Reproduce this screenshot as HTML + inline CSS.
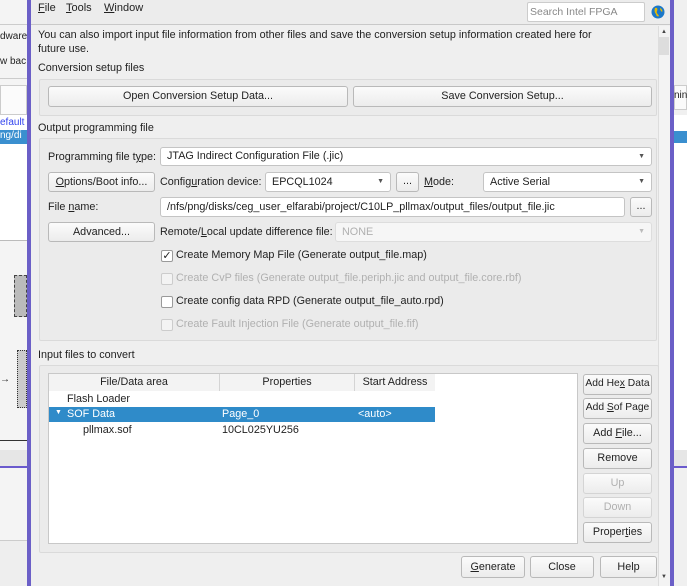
<!DOCTYPE html>
<html><head><style>
*{box-sizing:border-box;margin:0;padding:0}
body{width:687px;height:586px;overflow:hidden;background:#e8e8e8;font-family:"Liberation Sans","DejaVu Sans",sans-serif;font-size:10.8px;color:#222;position:relative}
.a{position:absolute;white-space:nowrap}
.btn{position:absolute;background:linear-gradient(#fbfbfb,#ececec);border:1px solid #b9b9b9;border-radius:3px;text-align:center;line-height:18px;white-space:nowrap;overflow:hidden}
.dis{color:#b0b0b0}
.cb{position:absolute;background:#fff;border:1px solid #9a9a9a;border-radius:2px;text-align:center;line-height:10px;font-size:11px}
.combo{position:absolute;background:#fff;border:1px solid #c4c4c4;border-radius:3px;padding-left:6px;line-height:17px;white-space:nowrap}
.combo .ar{position:absolute;right:6px;top:0;font-size:7px;color:#555}
.grp{position:absolute;border:1px solid #dadada;background:#ebebeb;border-radius:2px}
</style></head><body>
<div class="a" style="left:0;top:0;width:27px;height:586px;background:#f4f4f4"></div>
<div class="a" style="left:0;top:24px;width:27px;height:1px;background:#ccc"></div>
<div class="a" style="left:0;top:31px;font-size:10px">dware</div>
<div class="a" style="left:0;top:56px;font-size:10px">w bac</div>
<div class="a" style="left:0;top:78px;width:27px;height:1px;background:#ccc"></div>
<div class="a" style="left:0;top:85px;width:27px;height:30px;background:#fbfbfb;border:1px solid #ccc"></div>
<div class="a" style="left:0;top:115px;width:27px;height:125px;background:#fff"></div>
<div class="a" style="left:0;top:117px;color:#3344ee;font-size:10px">efault</div>
<div class="a" style="left:0;top:130px;width:27px;height:14px;background:#3a8fcf;color:#fff;font-size:10px">ng/di</div>
<div class="a" style="left:0;top:240px;width:27px;height:1px;background:#bbb"></div>
<div class="a" style="left:14px;top:275px;width:13px;height:42px;border:1px dashed #444;background:#bbb"></div>
<div class="a" style="left:17px;top:350px;width:10px;height:58px;border:1px dotted #333;background:#ccc"></div>
<div class="a" style="left:0;top:374px;font-size:10px">→</div>
<div class="a" style="left:0;top:440px;width:27px;height:1px;background:#333"></div>
<div class="a" style="left:0;top:450px;width:27px;height:18px;background:#e6e6e6;border-bottom:2px solid #6a5acd"></div>
<div class="a" style="left:0;top:540px;width:27px;height:46px;background:#eee;border-top:1px solid #ccc"></div>
<div class="a" style="left:674px;top:0;width:13px;height:586px;background:#f0f0f0"></div>
<div class="a" style="left:674px;top:85px;width:13px;height:25px;background:#fafafa;border:1px solid #ccc"></div>
<div class="a" style="left:674px;top:90px;font-size:10px">nin</div>
<div class="a" style="left:674px;top:115px;width:13px;height:340px;background:#fff"></div>
<div class="a" style="left:674px;top:131px;width:13px;height:12px;background:#3a8fcf"></div>
<div class="a" style="left:674px;top:450px;width:13px;height:18px;background:#e6e6e6;border-bottom:2px solid #6a5acd"></div>
<div class="a" style="left:27px;top:0;width:4px;height:586px;background:#6b5fc7"></div>
<div class="a" style="left:670px;top:0;width:4px;height:586px;background:#6b5fc7"></div>
<div class="a" style="left:31px;top:0;width:639px;height:586px;background:#efefef"></div>
<div class="a" style="left:31px;top:0;width:639px;height:25px;background:#ececec;border-bottom:1px solid #c8c8c8"></div>
<div class="a" style="left:38px;top:2px;font-size:11px"><u>F</u>ile</div>
<div class="a" style="left:66px;top:2px;font-size:11px"><u>T</u>ools</div>
<div class="a" style="left:104px;top:2px;font-size:11px"><u>W</u>indow</div>
<div class="a" style="left:527px;top:2px;width:118px;height:20px;background:#fff;border:1px solid #ccc;border-radius:2px;color:#888;padding:3px 2px;font-size:10.5px">Search Intel FPGA</div>
<svg class="a" style="left:651px;top:5px" width="14" height="14"><circle cx="7" cy="7" r="6.5" fill="#1c78c8"/><path d="M4 3 C6 2 7 4 6 6 C5 8 7 9 8 11 C7 12 5 11 5 9 C4 8 3 6 4 3Z M9 3 C11 4 12 6 11 7 C10 6 9 5 9 3Z" fill="#e8b800"/></svg>
<div class="a" style="left:658px;top:26px;width:12px;height:560px;background:#f3f3f3;border-left:1px solid #ddd"></div>
<div class="a" style="left:661px;top:29px;font-size:6px;color:#444">▲</div>
<div class="a" style="left:659px;top:37px;width:10px;height:18px;background:#ddd"></div>
<div class="a" style="left:661px;top:574px;font-size:6px;color:#444">▼</div>

<div class="a" style="left:38px;top:29px">You can also import input file information from other files and save the conversion setup information created here for</div>
<div class="a" style="left:38px;top:43px">future use.</div>
<div class="a" style="left:38px;top:62px">Conversion setup files</div>
<div class="grp" style="left:39px;top:79px;width:618px;height:37px"></div>
<div class="btn" style="left:48px;top:86px;width:300px;height:21px">Open Conversion Setup Data...</div>
<div class="btn" style="left:353px;top:86px;width:299px;height:21px">Save Conversion Setup...</div>
<div class="a" style="left:38px;top:122px">Output programming file</div>
<div class="grp" style="left:39px;top:138px;width:618px;height:203px"></div>
<div class="a" style="left:48px;top:151px">Programming file t<u>y</u>pe:</div>
<div class="combo" style="left:160px;top:147px;width:492px;height:19px">JTAG Indirect Configuration File (.jic)<span class="ar">▼</span></div>
<div class="btn" style="left:48px;top:172px;width:107px;height:20px"><u>O</u>ptions/Boot info...</div>
<div class="a" style="left:160px;top:176px">Config<u>u</u>ration device:</div>
<div class="combo" style="left:265px;top:172px;width:126px;height:20px;line-height:18px">EPCQL1024<span class="ar">▼</span></div>
<div class="btn" style="left:396px;top:172px;width:23px;height:20px;line-height:16px">...</div>
<div class="a" style="left:424px;top:176px"><u>M</u>ode:</div>
<div class="combo" style="left:483px;top:172px;width:169px;height:20px;line-height:18px">Active Serial<span class="ar">▼</span></div>
<div class="a" style="left:48px;top:201px">File <u>n</u>ame:</div>
<div class="combo" style="left:160px;top:197px;width:465px;height:20px;line-height:18px">/nfs/png/disks/ceg_user_elfarabi/project/C10LP_pllmax/output_files/output_file.jic</div>
<div class="btn" style="left:630px;top:197px;width:22px;height:20px;line-height:16px">...</div>
<div class="btn" style="left:48px;top:222px;width:107px;height:20px">Advanced...</div>
<div class="a" style="left:160px;top:226px">Remote/<u>L</u>ocal update difference file:</div>
<div class="combo dis" style="left:335px;top:222px;width:317px;height:20px;line-height:18px;border-color:#ddd;background:#f6f6f6">NONE<span class="ar" style="color:#bbb">▼</span></div>
<div class="cb" style="left:161px;top:250px;width:12px;height:12px">✓</div>
<div class="a" style="left:176px;top:249px">Create Memory Map File (Generate output_file.map)</div>
<div class="cb" style="left:161px;top:273px;width:12px;height:12px;border-color:#ccc;background:#f3f3f3"></div>
<div class="a dis" style="left:176px;top:272px">Create CvP files (Generate output_file.periph.jic and output_file.core.rbf)</div>
<div class="cb" style="left:161px;top:296px;width:12px;height:12px"></div>
<div class="a" style="left:176px;top:295px">Create config data RPD (Generate output_file_auto.rpd)</div>
<div class="cb" style="left:161px;top:319px;width:12px;height:12px;border-color:#ccc;background:#f3f3f3"></div>
<div class="a dis" style="left:176px;top:318px">Create Fault Injection File (Generate output_file.fif)</div>
<div class="a" style="left:38px;top:349px">Input files to convert</div>
<div class="grp" style="left:39px;top:365px;width:620px;height:188px"></div>
<div class="a" style="left:48px;top:373px;width:530px;height:171px;background:#fff;border:1px solid #c8c8c8"></div>
<div class="a" style="left:49px;top:374px;width:171px;height:17px;background:#f3f3f3;border-right:1px solid #d4d4d4;text-align:center;line-height:17px">File/Data area</div>
<div class="a" style="left:220px;top:374px;width:135px;height:17px;background:#f3f3f3;border-right:1px solid #d4d4d4;text-align:center;line-height:17px">Properties</div>
<div class="a" style="left:355px;top:374px;width:80px;height:17px;background:#f3f3f3;text-align:center;line-height:17px">Start Address</div>
<div class="a" style="left:67px;top:393px">Flash Loader</div>
<div class="a" style="left:49px;top:407px;width:386px;height:15px;background:#2f8bc9;color:#fff"></div>
<div class="a" style="left:55px;top:409px;color:#fff;font-size:7px">▼</div>
<div class="a" style="left:67px;top:408px;color:#fff">SOF Data</div>
<div class="a" style="left:222px;top:408px;color:#fff">Page_0</div>
<div class="a" style="left:358px;top:408px;color:#fff">&lt;auto&gt;</div>
<div class="a" style="left:83px;top:424px">pllmax.sof</div>
<div class="a" style="left:222px;top:424px">10CL025YU256</div>
<div class="btn" style="left:583px;top:374px;width:69px;height:21px;font-size:10.3px">Add He<u>x</u> Data</div>
<div class="btn" style="left:583px;top:398px;width:69px;height:21px;font-size:10.3px">Add <u>S</u>of Page</div>
<div class="btn" style="left:583px;top:423px;width:69px;height:21px">Add <u>F</u>ile...</div>
<div class="btn" style="left:583px;top:448px;width:69px;height:21px">Remove</div>
<div class="btn dis" style="left:583px;top:473px;width:69px;height:21px;border-color:#d4d4d4">Up</div>
<div class="btn dis" style="left:583px;top:497px;width:69px;height:21px;border-color:#d4d4d4">Down</div>
<div class="btn" style="left:583px;top:522px;width:69px;height:21px">Proper<u>t</u>ies</div>
<div class="btn" style="left:461px;top:556px;width:64px;height:22px;line-height:20px"><u>G</u>enerate</div>
<div class="btn" style="left:530px;top:556px;width:64px;height:22px;line-height:20px">Close</div>
<div class="btn" style="left:600px;top:556px;width:57px;height:22px;line-height:20px">Help</div>
</body></html>
